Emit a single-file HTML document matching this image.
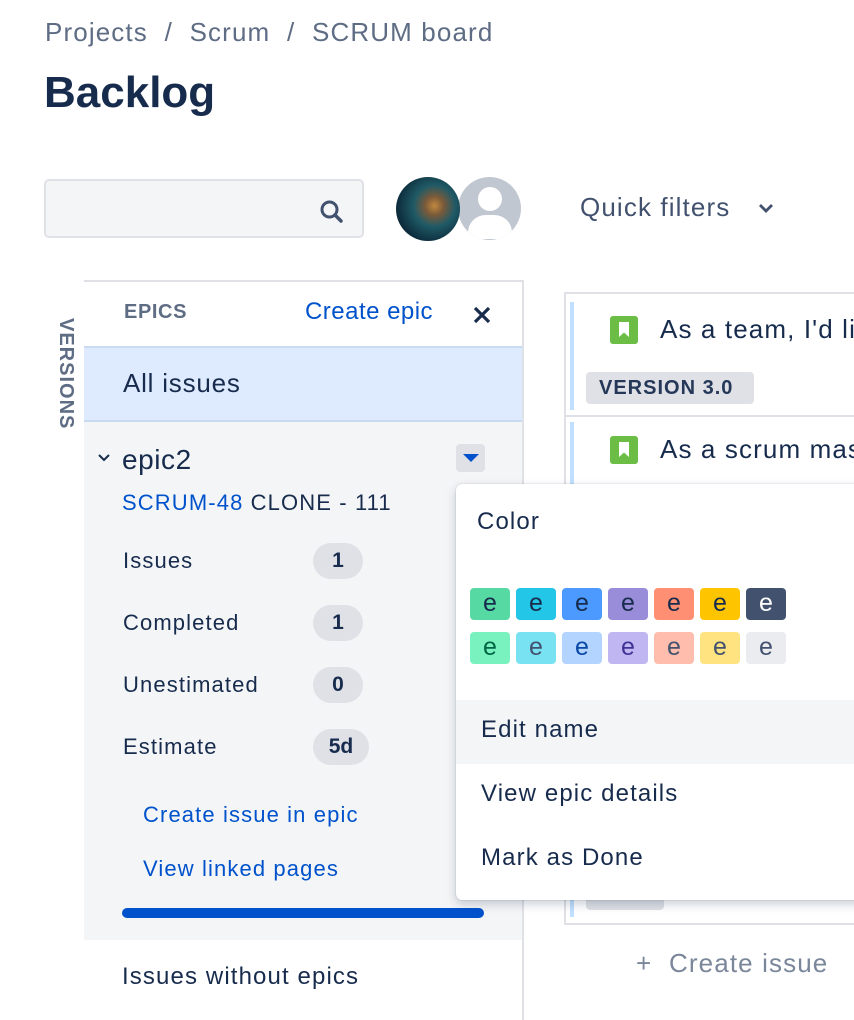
<!DOCTYPE html>
<html><head><meta charset="utf-8"><style>
*{box-sizing:border-box;margin:0;padding:0}
body{width:854px;height:1016px;overflow:hidden;background:#fff;font-family:"Liberation Sans",sans-serif;color:#172b4d;position:relative;letter-spacing:0.07em}
.a{position:absolute;white-space:nowrap}
.badge{position:absolute;left:313px;width:50px;height:36px;border-radius:18px;background:#dfe1e6;font-weight:bold;font-size:21px;text-align:center;line-height:36px;color:#172b4d;letter-spacing:0}
.lbl{position:absolute;left:123px;font-size:22px;line-height:26px;color:#172b4d}
.sw{position:absolute;width:40px;height:32px;border-radius:4px;font-size:25px;text-align:center;line-height:30px;letter-spacing:0}
.ico{position:absolute;width:28px;height:28px;background:#6bbd45;border-radius:3px}
.ico:after{content:"";position:absolute;left:9px;top:6px;width:10px;height:15px;background:#fff;clip-path:polygon(0 0,100% 0,100% 100%,50% 70%,0 100%)}
</style></head><body>
<div class="a" style="left:45px;top:17px;font-size:26px;color:#5e6c84">Projects &nbsp;/ &nbsp;Scrum &nbsp;/ &nbsp;SCRUM board</div>
<div class="a" style="left:44px;top:68px;font-size:44px;font-weight:bold;color:#172b4d;letter-spacing:0">Backlog</div>
<div class="a" style="left:44px;top:179px;width:320px;height:59px;background:#f4f5f7;border:2px solid #dfe1e6;border-radius:5px"></div>
<svg class="a" style="left:318px;top:198px" width="28" height="28" viewBox="0 0 28 28"><circle cx="11.5" cy="11.5" r="7.5" fill="none" stroke="#42526e" stroke-width="3"/><path d="M17 17l6 6" stroke="#42526e" stroke-width="3.5" stroke-linecap="round"/></svg>
<div class="a" style="left:458px;top:177px;width:63px;height:63px;border-radius:50%;background:#c1c7d0;overflow:hidden"><div style="position:absolute;left:20px;top:10px;width:24px;height:24px;border-radius:50%;background:#fff"></div><div style="position:absolute;left:10px;top:38px;width:44px;height:24px;border-radius:22px 22px 8px 8px;background:#fff"></div></div>
<div class="a" style="left:396px;top:177px;width:64px;height:64px;border-radius:50%;background:radial-gradient(circle at 60% 45%,#c2883e 0,#7a5a3a 18%,#1f5a66 40%,#0e2e3e 70%,#081a26 100%)"></div>
<div class="a" style="left:580px;top:192px;font-size:26px;color:#42526e">Quick filters</div>
<svg class="a" style="left:757px;top:200px" width="18" height="16"><path d="M3 5l6 6 6-6" fill="none" stroke="#42526e" stroke-width="2.8"/></svg>
<div class="a" style="left:53px;top:318px;width:24px;height:124px"><div style="transform:rotate(90deg);transform-origin:0 0;position:absolute;left:24px;top:0;font-size:20px;font-weight:bold;color:#5e6c84;letter-spacing:1px">VERSIONS</div></div>
<div class="a" style="left:84px;top:280px;width:440px;height:740px;border-top:2px solid #dfe1e6;border-right:2px solid #dfe1e6;background:#fff"></div>
<div class="a" style="left:124px;top:301px;font-size:20px;font-weight:bold;color:#5e6c84;letter-spacing:0.03em">EPICS</div>
<div class="a" style="left:305px;top:298px;font-size:24px;color:#0052cc;letter-spacing:0.02em">Create epic</div>
<svg class="a" style="left:472px;top:305px" width="20" height="20"><path d="M3 3l14 14M17 3L3 17" stroke="#172b4d" stroke-width="3.2"/></svg>
<div class="a" style="left:84px;top:346px;width:438px;height:76px;background:#deebff;border-top:2px solid #c9daf2;border-bottom:2px solid #c9daf2"></div>
<div class="a" style="left:123px;top:368px;font-size:26px;letter-spacing:0.03em">All issues</div>
<div class="a" style="left:84px;top:422px;width:438px;height:518px;background:#f4f5f7"></div>
<svg class="a" style="left:97px;top:452px" width="14" height="12"><path d="M2 3l5 5 5-5" fill="none" stroke="#172b4d" stroke-width="2"/></svg>
<div class="a" style="left:122px;top:444px;font-size:28px;letter-spacing:0.02em">epic2</div>
<div class="a" style="left:456px;top:444px;width:29px;height:28px;background:#dfe1e6;border-radius:4px"><div style="position:absolute;left:7px;top:10px;border-left:8px solid transparent;border-right:8px solid transparent;border-top:8px solid #0052cc"></div></div>
<div class="a" style="left:122px;top:490px;font-size:22px"><span style="color:#0052cc">SCRUM-48</span> CLONE - 111</div>
<div class="lbl" style="top:548px">Issues</div><div class="badge" style="top:543px">1</div>
<div class="lbl" style="top:610px">Completed</div><div class="badge" style="top:605px">1</div>
<div class="lbl" style="top:672px">Unestimated</div><div class="badge" style="top:667px">0</div>
<div class="lbl" style="top:734px">Estimate</div><div class="badge" style="top:729px;width:56px">5d</div>
<div class="a" style="left:143px;top:802px;font-size:22px;color:#0052cc">Create issue in epic</div>
<div class="a" style="left:143px;top:856px;font-size:22px;color:#0052cc">View linked pages</div>
<div class="a" style="left:122px;top:908px;width:362px;height:10px;background:#0052cc;border-radius:5px"></div>
<div class="a" style="left:122px;top:963px;font-size:24px">Issues without epics</div>
<div class="a" style="left:564px;top:292px;width:300px;height:633px;border-left:2px solid #dfe1e6;border-top:2px solid #dfe1e6;border-bottom:2px solid #dfe1e6"></div>
<div class="a" style="left:564px;top:415px;width:300px;height:2px;background:#dfe1e6"></div>
<div class="a" style="left:570px;top:302px;width:4px;height:108px;background:#c1e0ff"></div>
<div class="a" style="left:570px;top:422px;width:4px;height:495px;background:#c1e0ff"></div>
<div class="ico" style="left:610px;top:316px"></div>
<div class="a" style="left:660px;top:314px;font-size:26px">As a team, I'd like</div>
<div class="a" style="left:586px;top:372px;width:168px;height:32px;background:#dfe1e6;border-radius:4px;font-size:20px;font-weight:bold;color:#253858;line-height:32px;padding-left:13px;letter-spacing:0.05em">VERSION 3.0</div>
<div class="ico" style="left:610px;top:436px"></div>
<div class="a" style="left:660px;top:434px;font-size:26px">As a scrum master</div>
<div class="a" style="left:586px;top:884px;width:78px;height:26px;background:#dfe1e6;border-radius:4px"></div>
<div class="a" style="left:636px;top:948px;font-size:26px;color:#7a869a">+&nbsp; Create issue</div>
<div class="a" style="left:456px;top:484px;width:410px;height:416px;background:#fff;border-radius:6px;box-shadow:0 4px 10px rgba(9,30,66,.22),0 0 1px rgba(9,30,66,.35)">
<div class="a" style="left:21px;top:24px;font-size:24px">Color</div>
<div class="a" style="left:0;top:216px;width:410px;height:64px;background:#f4f5f7"></div>
<div class="a" style="left:25px;top:232px;font-size:24px">Edit name</div>
<div class="a" style="left:25px;top:296px;font-size:24px">View epic details</div>
<div class="a" style="left:25px;top:360px;font-size:24px">Mark as Done</div>
</div>
<div class="sw" style="left:470px;top:588px;background:#57d9a3">e</div>
<div class="sw" style="left:516px;top:588px;background:#23c6e6">e</div>
<div class="sw" style="left:562px;top:588px;background:#4c9aff">e</div>
<div class="sw" style="left:608px;top:588px;background:#998dd9">e</div>
<div class="sw" style="left:654px;top:588px;background:#ff8f73">e</div>
<div class="sw" style="left:700px;top:588px;background:#ffc400">e</div>
<div class="sw" style="left:746px;top:588px;background:#42526e;color:#fff">e</div>
<div class="sw" style="left:470px;top:632px;background:#79f2c0;color:#006644">e</div>
<div class="sw" style="left:516px;top:632px;background:#79e2f2;color:#42526e">e</div>
<div class="sw" style="left:562px;top:632px;background:#b3d4ff;color:#0747a6">e</div>
<div class="sw" style="left:608px;top:632px;background:#c0b6f2;color:#403294">e</div>
<div class="sw" style="left:654px;top:632px;background:#ffbdad;color:#42526e">e</div>
<div class="sw" style="left:700px;top:632px;background:#ffe380;color:#42526e">e</div>
<div class="sw" style="left:746px;top:632px;background:#ebecf0;color:#42526e">e</div>
</body></html>
